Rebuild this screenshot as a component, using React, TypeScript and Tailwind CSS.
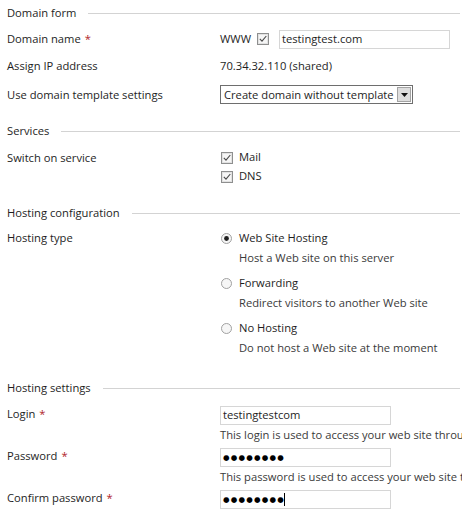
import type { ReactNode } from "react";

const FONT = "font-['Open_Sans','Noto_Sans',sans-serif]";

function Legend({ title, className = "" }: { title: string; className?: string }) {
  return (
    <div className={`flex h-4 items-center pr-[2px] ${className}`}>
      <span className="leading-4">{title}</span>
      <span className="ml-[12px] h-px flex-1 bg-[#d3d3d3]" />
    </div>
  );
}

function Row({
  label,
  required,
  className = "",
  alignTop,
  labelClass = "leading-4",
  children,
}: {
  label: string;
  required?: boolean;
  className?: string;
  alignTop?: boolean;
  labelClass?: string;
  children: ReactNode;
}) {
  return (
    <div className={`flex ${alignTop ? "items-start" : "items-center"} ${className}`}>
      <div className={`w-[213px] shrink-0 ${labelClass}`}>
        {label}
        {required && <span className="ml-[4px] text-[#b0262b]">*</span>}
      </div>
      <div className="min-w-0 flex-1">{children}</div>
    </div>
  );
}

function Checkbox() {
  return (
    <svg width="12" height="12" viewBox="0 0 12 12" className="shrink-0">
      <rect x="0.5" y="0.5" width="11" height="11" fill="#f6f6f6" stroke="#8e8f8f" />
      <rect x="1.5" y="1.5" width="9" height="9" fill="none" stroke="#e2e2e2" />
      <path d="M2.8 5.8 L5 8.2 L9.3 3" fill="none" stroke="#4a4a4a" strokeWidth="1.1" />
    </svg>
  );
}

function Radio({ checked }: { checked?: boolean }) {
  return (
    <svg width="11" height="11" viewBox="0 0 11 11" className="shrink-0">
      <circle cx="5.5" cy="5.5" r="5" fill="#f6f6f6" stroke="#a0a0a0" />
      {checked && <circle cx="5.5" cy="5.5" r="2.4" fill="#1f1f1f" />}
    </svg>
  );
}

// masked value: bold dots, about 7px apart, as the native field draws them
function Dots({ count }: { count: number }) {
  return (
    <span className="font-['DejaVu_Sans',sans-serif] text-[7.5px] leading-none tracking-[1.2px] text-black">
      {"●".repeat(count)}
    </span>
  );
}

function Field({ children }: { children: ReactNode }) {
  return (
    <div className="flex h-[19px] w-[171px] items-center border border-[#d6d6d6] bg-white px-[2px]">
      {children}
    </div>
  );
}

function Option({
  title,
  desc,
  checked,
  className = "",
}: {
  title: string;
  desc: string;
  checked?: boolean;
  className?: string;
}) {
  return (
    <div className={className}>
      <div className="flex h-4 items-center">
        <span className="ml-[1px] flex w-[18px]">
          <Radio checked={checked} />
        </span>
        <span className="leading-4">{title}</span>
      </div>
      <div className="mt-[4px] pl-[19px] leading-4 text-[#3a3a3a]">{desc}</div>
    </div>
  );
}

export default function App() {
  return (
    <div
      className={`h-[516px] w-[462px] overflow-hidden whitespace-nowrap bg-white pl-[7px] pt-[5px] text-[11.2px] text-[#1e1e1e] ${FONT}`}
    >
      <Legend title="Domain form" />
      <Row label="Domain name" required className="mt-[7px] h-[22px]">
        <div className="flex items-center">
          <span className="leading-4">WWW</span>
          <span className="ml-[6px] flex">
            <Checkbox />
          </span>
          <span className="ml-[10px]">
            <Field>testingtest.com</Field>
          </span>
        </div>
      </Row>
      <Row label="Assign IP address" className="mt-[8px] h-4">
        <span className="leading-4">70.34.32.110 (shared)</span>
      </Row>
      <Row label="Use domain template settings" className="mt-[10px] h-[21px]">
        <div className="flex h-[19px] w-[193px] items-center justify-between border border-[#6e6e6e] bg-white pl-[3px] pr-[1px]">
          <span className="leading-4">Create domain without template</span>
          <span className="flex h-[15px] w-[14px] items-center justify-center border border-[#a3a3a3] bg-[#dedede]">
            <svg width="7" height="4" viewBox="0 0 7 4">
              <path d="M0 0 H7 L3.5 4 Z" fill="#111" />
            </svg>
          </span>
        </div>
      </Row>

      <Legend title="Services" className="mt-[18px]" />
      <Row label="Switch on service" alignTop labelClass="leading-[19px]" className="mt-[9px]">
        <div className="flex h-[19px] items-center">
          <span className="ml-[1px] flex w-[18px]">
            <Checkbox />
          </span>
          Mail
        </div>
        <div className="flex h-[19px] items-center">
          <span className="ml-[1px] flex w-[18px]">
            <Checkbox />
          </span>
          DNS
        </div>
      </Row>

      <Legend title="Hosting configuration" className="mt-[19px]" />
      <Row label="Hosting type" alignTop className="mt-[9px]">
        <Option title="Web Site Hosting" desc="Host a Web site on this server" checked />
        <Option
          title="Forwarding"
          desc="Redirect visitors to another Web site"
          className="mt-[9px]"
        />
        <Option
          title="No Hosting"
          desc="Do not host a Web site at the moment"
          className="mt-[9px]"
        />
      </Row>

      <Legend title="Hosting settings" className="mt-[24px]" />
      <Row label="Login" required alignTop className="mt-[10px]">
        <Field>testingtestcom</Field>
        <div className="mt-[2px] leading-4 text-[#3a3a3a]">
          This login is used to access your web site through FTP.
        </div>
      </Row>
      <Row label="Password" required alignTop className="mt-[5px]">
        <Field>
          <Dots count={8} />
        </Field>
        <div className="mt-[2px] leading-4 text-[#3a3a3a]">
          This password is used to access your web site through FTP.
        </div>
      </Row>
      <Row label="Confirm password" required alignTop className="mt-[5px]">
        <Field>
          <Dots count={8} />
          <span className="-ml-[1px] h-[13px] w-px bg-black" />
        </Field>
      </Row>
    </div>
  );
}
